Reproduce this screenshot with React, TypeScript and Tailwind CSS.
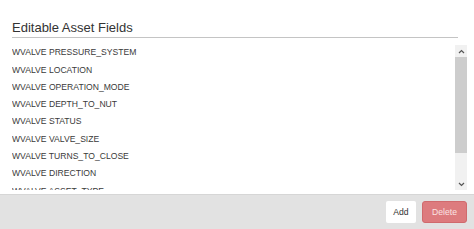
import React from "react";

const items = [
  "WVALVE PRESSURE_SYSTEM",
  "WVALVE LOCATION",
  "WVALVE OPERATION_MODE",
  "WVALVE DEPTH_TO_NUT",
  "WVALVE STATUS",
  "WVALVE VALVE_SIZE",
  "WVALVE TURNS_TO_CLOSE",
  "WVALVE DIRECTION",
  "WVALVE ASSET_TYPE",
];

export default function App() {
  return (
    <div
      className="w-[474px] h-[229px] bg-white flex flex-col overflow-hidden text-[#333]"
      style={{ fontFamily: '"Liberation Sans", Arial, sans-serif' }}
    >
      <div className="pl-[12px] pr-[16px] pt-[21px]">
        <div className="text-[13px] leading-[14px] pb-[2px] border-b border-[#c4c4c4]">
          Editable Asset Fields
        </div>
      </div>
      <div className="flex-1 flex pl-[12px] pr-[7px] pt-[5px] pb-[4px] min-h-0">
        <div className="flex-1 overflow-hidden pt-[1px]">
          {items.map((it) => (
            <div key={it} className="h-[17.3px] flex items-center text-[8.6px] text-[#3a3a3a] whitespace-nowrap">
              {it}
            </div>
          ))}
        </div>
        <div className="w-[12px] mt-[2px] bg-[#f1f1f1] flex flex-col items-center">
          <div className="h-[12px] w-full flex items-center justify-center">
            <svg width="7" height="5" viewBox="0 0 7 5">
              <path d="M1 4 L3.5 1.5 L6 4" fill="none" stroke="#555" strokeWidth="1.2" />
            </svg>
          </div>
          <div className="w-full h-[96px] bg-[#cdcdcd]" />
          <div className="flex-1" />
          <div className="h-[12px] w-full flex items-center justify-center">
            <svg width="7" height="5" viewBox="0 0 7 5">
              <path d="M1 1 L3.5 3.5 L6 1" fill="none" stroke="#555" strokeWidth="1.2" />
            </svg>
          </div>
        </div>
      </div>
      <div className="h-[35px] bg-[#e2e2e2] border-t border-[#d6d6d6] flex items-center justify-end gap-[6px] pr-[7px]">
        <button className="h-[22px] w-[30px] bg-white rounded-[2px] text-[8.6px] text-[#333] flex items-center justify-center">
          Add
        </button>
        <button className="h-[22px] w-[45px] bg-[#dd7b7e] border border-[#d06a6d] rounded-[3px] text-[8.6px] text-[#fbe3e3] flex items-center justify-center">
          Delete
        </button>
      </div>
    </div>
  );
}
